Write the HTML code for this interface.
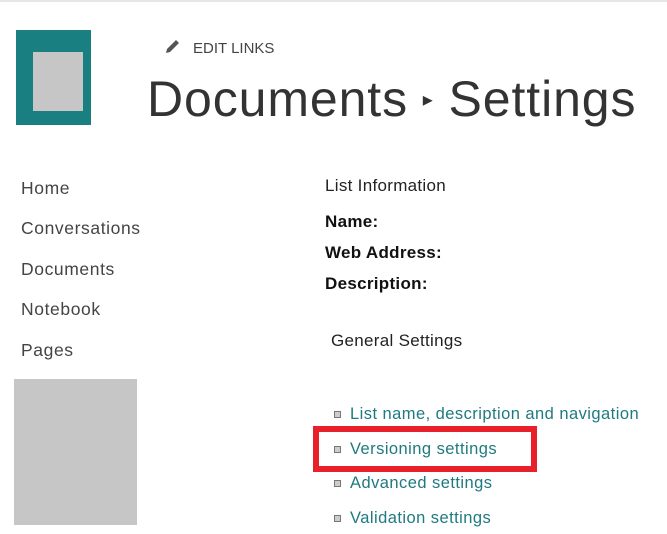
<!DOCTYPE html>
<html><head><style>
body{margin:0;width:667px;height:534px;background:#fff;position:relative;overflow:hidden;font-family:"Liberation Sans",sans-serif;}
.a{position:absolute;white-space:nowrap;}
.nav{color:#444;font-size:17.5px;left:21px;letter-spacing:0.6px;}
.lk{color:#1f7a80;font-size:16.5px;left:350px;letter-spacing:0.45px;}
.bl{position:absolute;left:334px;width:5px;height:5px;border:1px solid #777;background:#ccc;}
</style></head><body>
<div class="a" style="left:0;top:0;width:667px;height:2px;background:#e6e6e6"></div>
<div class="a" style="left:16px;top:30px;width:75px;height:95px;background:#1a7f80"></div>
<div class="a" style="left:33px;top:52px;width:50px;height:59px;background:#c6c6c6"></div>
<svg class="a" style="left:163px;top:38px" width="18" height="18" viewBox="0 0 18 18"><path d="M3 15 L4 11 L13 2 L16 5 L7 14 Z" fill="#555"/></svg>
<div class="a" style="left:193px;top:40px;font-size:15px;color:#444">EDIT LINKS</div>
<div class="a" style="left:147px;top:70px;font-size:50px;color:#333;letter-spacing:0.9px">Documents <span style="font-size:20px;position:relative;top:-10px">&#9656;</span> Settings</div>
<div class="a nav" style="top:178px">Home</div>
<div class="a nav" style="top:218px">Conversations</div>
<div class="a nav" style="top:259px">Documents</div>
<div class="a nav" style="top:299px">Notebook</div>
<div class="a nav" style="top:340px">Pages</div>
<div class="a" style="left:14px;top:379px;width:123px;height:146px;background:#c6c6c6"></div>
<div class="a" style="left:325px;top:176px;font-size:17px;color:#222;letter-spacing:0.3px">List Information</div>
<div class="a" style="left:325px;top:212px;font-size:17px;color:#111;font-weight:bold;letter-spacing:0.3px">Name:</div>
<div class="a" style="left:325px;top:243px;font-size:17px;color:#111;font-weight:bold;letter-spacing:0.3px">Web Address:</div>
<div class="a" style="left:325px;top:274px;font-size:17px;color:#111;font-weight:bold;letter-spacing:0.3px">Description:</div>
<div class="a" style="left:331px;top:331px;font-size:17px;color:#222;letter-spacing:0.3px">General Settings</div>
<div class="bl" style="top:411px"></div><div class="a lk" style="top:405px">List name, description and navigation</div>
<div class="bl" style="top:446px"></div><div class="a lk" style="top:440px">Versioning settings</div>
<div class="bl" style="top:480px"></div><div class="a lk" style="top:474px">Advanced settings</div>
<div class="bl" style="top:515px"></div><div class="a lk" style="top:509px">Validation settings</div>
<div class="a" style="left:313px;top:426px;width:212px;height:34px;border:6px solid #e8202a"></div>
</body></html>
